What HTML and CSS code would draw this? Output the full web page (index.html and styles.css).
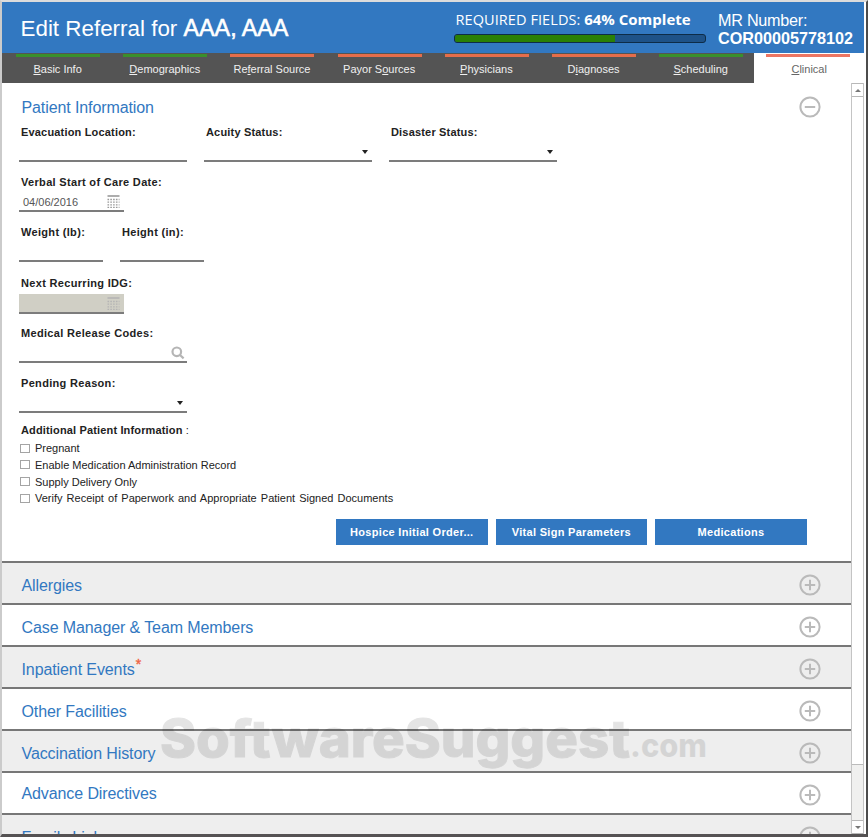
FILE: index.html
```html
<!DOCTYPE html>
<html lang="en">
<head>
<meta charset="utf-8">
<title>Edit Referral</title>
<link rel="stylesheet" href="styles.css">
</head>
<body>
<svg class="defs" aria-hidden="true">
  <symbol id="plus" viewBox="0 0 24 24"><circle cx="12" cy="12" r="9.6"/><path d="M12 6.8v10.4M6.8 12h10.4"/></symbol>
  <symbol id="minus" viewBox="0 0 24 24"><circle cx="12" cy="12" r="9.6"/><path d="M6.8 12h10.4"/></symbol>
  <symbol id="calendar" viewBox="0 0 13 13"><path d="M.5 1h12" stroke-width="1.6"/><path d="M.5 4.5h12M.5 7.2h12M.5 9.9h12M.5 12.4h12" stroke-width="1.3" stroke-dasharray="1.6 1.2"/></symbol>
</svg>
<div class="window">
  <header class="header">
    <h1 class="title">Edit Referral for <span class="name">AAA, AAA</span></h1>
    <div class="required">
      <div class="required-text"><span class="req-label">REQUIRED FIELDS:</span> <b>64% Complete</b></div>
      <div class="progress"><div class="progress-fill"></div></div>
    </div>
    <div class="mr"><div class="mr-label">MR Number:</div><b>COR00005778102</b></div>
  </header>
  <nav class="tabs">
    <a class="tab done"><span><u>B</u>asic Info</span></a>
    <a class="tab done"><span><u>D</u>emographics</span></a>
    <a class="tab"><span>Re<u>f</u>erral Source</span></a>
    <a class="tab"><span>Payor S<u>o</u>urces</span></a>
    <a class="tab"><span><u>P</u>hysicians</span></a>
    <a class="tab"><span>D<u>i</u>agnoses</span></a>
    <a class="tab done"><span><u>S</u>cheduling</span></a>
    <a class="tab active"><span><u>C</u>linical</span></a>
  </nav>
  <div class="body">
    <main class="content">
      <section class="panel">
        <div class="panel-head"><h2>Patient Information</h2><svg class="toggle"><use href="#minus"/></svg></div>
        <div class="fields">
          <div class="row">
            <div class="field"><label>Evacuation Location:</label><div class="input"></div></div>
            <div class="field"><label>Acuity Status:</label><div class="input"><i class="caret"></i></div></div>
            <div class="field"><label>Disaster Status:</label><div class="input"><i class="caret"></i></div></div>
          </div>
          <div class="row">
            <div class="field date"><label class="loose">Verbal Start of Care Date:</label><div class="input"><span class="value">04/06/2016</span><svg class="cal"><use href="#calendar"/></svg></div></div>
          </div>
          <div class="row">
            <div class="field small"><label class="loose">Weight (lb):</label><div class="input"></div></div>
            <div class="field small"><label class="loose">Height (in):</label><div class="input"></div></div>
          </div>
          <div class="row">
            <div class="field date disabled"><label class="loose">Next Recurring IDG:</label><div class="input"><svg class="cal"><use href="#calendar"/></svg></div></div>
          </div>
          <div class="row">
            <div class="field"><label class="loose">Medical Release Codes:</label><div class="input"><svg class="search" viewBox="0 0 14 14"><circle cx="5.8" cy="5.8" r="4.3"/><path d="M9 9l3.6 3.4"/></svg></div></div>
          </div>
          <div class="row">
            <div class="field"><label class="loose">Pending Reason:</label><div class="input"><i class="caret"></i></div></div>
          </div>
        </div>
        <div class="checks">
          <div class="checks-title"><b>Additional Patient Information</b> :</div>
          <div class="check"><i class="box"></i><span>Pregnant</span></div>
          <div class="check"><i class="box"></i><span>Enable Medication Administration Record</span></div>
          <div class="check"><i class="box"></i><span>Supply Delivery Only</span></div>
          <div class="check"><i class="box"></i><span class="wide">Verify Receipt of Paperwork and Appropriate Patient Signed Documents</span></div>
        </div>
        <div class="buttons">
          <div class="button">Hospice Initial Order...</div>
          <div class="button">Vital Sign Parameters</div>
          <div class="button">Medications</div>
        </div>
      </section>
      <section class="section"><h2>Allergies</h2><svg class="toggle"><use href="#plus"/></svg></section>
      <section class="section"><h2>Case Manager &amp; Team Members</h2><svg class="toggle"><use href="#plus"/></svg></section>
      <section class="section"><h2>Inpatient Events<span class="star">*</span></h2><svg class="toggle"><use href="#plus"/></svg></section>
      <section class="section"><h2>Other Facilities</h2><svg class="toggle"><use href="#plus"/></svg></section>
      <section class="section"><h2>Vaccination History</h2><svg class="toggle"><use href="#plus"/></svg></section>
      <section class="section raised"><h2>Advance Directives</h2><svg class="toggle"><use href="#plus"/></svg></section>
      <section class="section"><h2>Family Links</h2><svg class="toggle"><use href="#plus"/></svg></section>
    </main>
    <div class="scrollbar">
      <div class="arrow"><i class="up"></i></div>
      <div class="thumb"></div>
      <div class="track"></div>
      <div class="arrow"><i class="down"></i></div>
    </div>
  </div>
</div>
<svg class="watermark" viewBox="0 0 560 80">
  <text x="0" y="57" font-size="52" stroke="#000" stroke-width="1" textLength="470" lengthAdjust="spacingAndGlyphs">SoftwareSuggest</text>
  <text x="470" y="57" font-size="32" textLength="77" lengthAdjust="spacingAndGlyphs">.com</text>
</svg>
</body>
</html>
```

FILE: styles.css
```css
* { box-sizing: border-box; }
body {
  margin: 0;
  width: 868px;
  height: 837px;
  overflow: hidden;
  position: relative;
  font-family: "Liberation Sans", sans-serif;
  font-size: 11px;
  color: #222;
  background: #fff;
}
.defs { position: absolute; width: 0; height: 0; }
.window {
  width: 868px;
  height: 837px;
  display: flex;
  flex-direction: column;
  border-left: 2px solid #cbcbcb;
  border-top: 2px solid #dcdcdc;
  border-right: 2px solid #4c4c4c;
  border-bottom: 3px solid #555253;
}
.header {
  height: 51px;
  flex: none;
  display: flex;
  background: #3278c1;
  color: #fff;
  margin-right: 2px;
}
.title {
  margin: 0;
  width: 452px;
  padding: 13px 0 0 18.5px;
  font-size: 22.4px;
  font-weight: 400;
  line-height: 26px;
  white-space: nowrap;
}
.name { -webkit-text-stroke: .6px #fff; font-size: 23.3px; }
.required { width: 264px; }
.required-text {
  font: 14.5px/20px "Open Sans", sans-serif;
  padding-left: 1.5px;
  margin-top: 7px;
  white-space: nowrap;
}
.req-label { letter-spacing: .08px; }
.required-text b { font-size: 15px; }
.progress {
  width: 252px;
  height: 9px;
  margin-top: 4px;
  border: 1px solid #0d2c48;
  border-radius: 3px;
  background: #1e5288;
  overflow: hidden;
}
.progress-fill { width: 64%; height: 100%; background: #2a8006; }
.mr { font-size: 16.2px; line-height: 18px; padding-top: 9px; white-space: nowrap; }
.mr-label { letter-spacing: -.25px; }
.tabs {
  height: 30px;
  flex: none;
  display: grid;
  grid-template-columns: repeat(7, 107.2px) 1fr;
  padding-left: 2px;
  margin-right: 2px;
  background: #545454;
}
.tab {
  display: flex;
  justify-content: center;
  position: relative;
  padding-top: 10px;
  line-height: 13px;
  color: #f0f0f0;
}
.tab::before {
  content: "";
  position: absolute;
  left: 12px;
  width: 84px;
  top: 1px;
  height: 3px;
  background: #e56d4a;
}
.tab.done::before { background: #3a8f2b; }
.tab.active { background: #fff; color: #666; }
.tab.active::before { background: #ec7663; }
.body { flex: 1; min-height: 0; display: flex; }
.content { width: 849px; overflow: hidden; }
h2 {
  margin: 0;
  font-size: 16px;
  font-weight: 400;
  line-height: 20px;
  letter-spacing: -.1px;
  padding-top: 1px;
  color: #3278c1;
  white-space: nowrap;
}
.toggle { width: 24px; height: 24px; fill: none; stroke: #bababa; stroke-width: 2; }
.panel { height: 478px; padding: 12px 0 0 17px; }
.panel-head { display: flex; justify-content: space-between; align-items: center; height: 24px; padding: 0 29px 0 2.5px; }
.fields { margin-top: 6px; }
.row { display: flex; gap: 17px; height: 50.2px; }
.field { width: 168px; }
.field.date { width: 105px; }
.field.small { width: 84px; }
label {
  display: block;
  height: 14px;
  line-height: 14px;
  padding-left: 2px;
  font-weight: 700;
  letter-spacing: .18px;
  white-space: nowrap;
}
.loose { letter-spacing: .32px; }
.input {
  height: 23px;
  display: flex;
  align-items: center;
  justify-content: flex-end;
  border-bottom: 2px solid #7c7c7c;
}
.value { flex: 1; padding: 4px 0 0 4px; color: #555; }
.cal { width: 13px; height: 13px; margin: 4px 4px 0 0; fill: none; stroke: #999; }
.disabled .input { height: 20px; margin-top: 4px; background: #d0cfc5; }
.disabled .cal { stroke: #b4b4b4; margin-top: 2px; }
.caret {
  margin: 5px 4px 0 0;
  border: 3.5px solid transparent;
  border-top: 4px solid #222;
  border-bottom: 0;
}
.search { width: 14px; height: 14px; margin: 5px 2px 0 0; fill: none; stroke: #b5b5b5; stroke-width: 2.2; }
.checks { margin-top: -3.5px; padding-left: 1px; }
.checks-title { line-height: 14px; padding-left: 1px; letter-spacing: .15px; margin-bottom: 3px; }
.check { display: flex; align-items: center; gap: 5px; height: 16.8px; white-space: nowrap; }
.box { width: 10px; height: 9px; border: 1px solid #a4a4a4; background: #fff; }
.wide { word-spacing: 1.05px; }
.buttons { display: flex; gap: 8px; margin: 12.4px 0 0 317px; }
.button {
  width: 151.6px;
  height: 26px;
  line-height: 26px;
  text-align: center;
  font-weight: 700;
  letter-spacing: .3px;
  color: #fff;
  background: #3278c1;
}
.section {
  height: 42px;
  border-top: 2px solid #777;
  padding: 4px 29px 0 19.5px;
  display: flex;
  align-items: center;
  justify-content: space-between;
}
.section:nth-child(even) { background: #eee; }
.raised h2 { margin-top: -4px; }
.star { color: #ee6545; font-size: 14px; line-height: 1; position: relative; top: -6px; left: 1px; -webkit-text-stroke: .4px #ee6545; }
.scrollbar {
  width: 13px;
  display: flex;
  flex-direction: column;
  border-left: 1px solid #c4c4c4;
  border-right: 1px solid #c4c4c4;
  background: #f0f0ef;
}
.arrow { height: 14px; display: flex; align-items: center; justify-content: center; background: #fff; border: solid #b8b8b8; border-width: 1px 0; }
.up, .down { border: 3px solid transparent; }
.up { border-bottom-color: #777; border-top: 0; }
.down { border-top-color: #777; border-bottom: 0; }
.thumb { height: 668px; background: #fff; border-bottom: 1px solid #bbb; }
.track { flex: 1; }
.watermark {
  position: absolute;
  left: 160px;
  top: 700px;
  width: 560px;
  height: 80px;
  opacity: .1;
  font-family: Inter, sans-serif;
  font-weight: 800;
  fill: #000;
  pointer-events: none;
}
```
